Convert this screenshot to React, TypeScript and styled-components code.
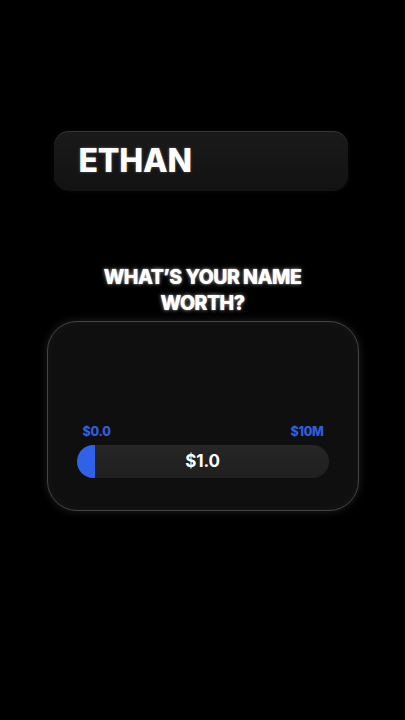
import styled, { createGlobalStyle } from "styled-components";

const GlobalStyle = createGlobalStyle`
  html, body {
    margin: 0;
    padding: 0;
    background: #000;
  }
  body {
    font-family: Inter, "Noto Sans", Arial, sans-serif;
    color: #fff;
  }
`;

const Page = styled.div`
  width: 405px;
  height: 720px;
  background: #000;
  display: flex;
  flex-direction: column;
  align-items: center;
  box-sizing: border-box;
  padding-top: 131px;
  overflow: hidden;
`;

const NameBox = styled.div`
  width: 294px;
  height: 60px;
  box-sizing: border-box;
  border-radius: 15px;
  background: linear-gradient(180deg, #1a1a1a 0%, #121212 100%);
  box-shadow: inset 0 1px 0 rgba(255, 255, 255, 0.12), 0 0 6px rgba(255, 255, 255, 0.04);
  display: flex;
  align-items: center;
  padding-left: 25px;
  margin-left: -4px;
`;

const NameText = styled.span`
  font-family: Inter, "Noto Sans", sans-serif;
  font-weight: 800;
  font-size: 32px;
  letter-spacing: -0.2px;
  color: #fff;
  line-height: 1;
  text-shadow: 0 0 3px rgba(255, 255, 255, 0.3);
`;

const Heading = styled.h1`
  margin: 73px 0 0;
  font-family: Inter, "Noto Sans", sans-serif;
  font-weight: 800;
  font-size: 19.5px;
  line-height: 26px;
  letter-spacing: -0.5px;
  text-align: center;
  color: #fff;
  text-shadow: 0 0 4px rgba(255, 255, 255, 0.6), 0 0 1px rgba(255, 255, 255, 0.9);
`;

const Card = styled.div`
  margin-top: 5px;
  width: 312px;
  height: 190px;
  box-sizing: border-box;
  border-radius: 30px;
  background: #0f0f10;
  border: 1.5px solid #444446;
  box-shadow: 0 0 8px rgba(255, 255, 255, 0.12), inset 0 0 10px rgba(255, 255, 255, 0.04);
  display: flex;
  flex-direction: column;
  justify-content: flex-end;
  padding: 0 29px 32px 29px;
`;

const Labels = styled.div`
  display: flex;
  justify-content: space-between;
  padding: 0 5px 0 6px;
  margin-bottom: 6px;
`;

const Label = styled.span`
  font-family: Inter, "Noto Sans", sans-serif;
  font-weight: 800;
  font-size: 12.5px;
  letter-spacing: -0.3px;
  color: #2f5fdf;
  line-height: 14px;
`;

const Track = styled.div`
  position: relative;
  height: 33px;
  border-radius: 17px;
  background: linear-gradient(180deg, #262626 0%, #1f1f1f 100%);
  overflow: hidden;
  display: flex;
  align-items: center;
  justify-content: center;
`;

const Fill = styled.div`
  position: absolute;
  left: 0;
  top: 0;
  bottom: 0;
  background: #2f62e8;
`;

const Value = styled.span`
  position: relative;
  top: -1px;
  font-family: Inter, "Noto Sans", sans-serif;
  font-weight: 700;
  font-size: 17px;
  letter-spacing: -0.2px;
  color: #fff;
`;

export default function App() {
  const fillWidth = 18;
  return (
    <>
      <GlobalStyle />
      <Page>
        <NameBox>
          <NameText>ETHAN</NameText>
        </NameBox>
        <Heading>
          WHAT’S YOUR NAME
          <br />
          WORTH?
        </Heading>
        <Card>
          <Labels>
            <Label>$0.0</Label>
            <Label>$10M</Label>
          </Labels>
          <Track>
            <Fill style={{ width: fillWidth }} />
            <Value>$1.0</Value>
          </Track>
        </Card>
      </Page>
    </>
  );
}
